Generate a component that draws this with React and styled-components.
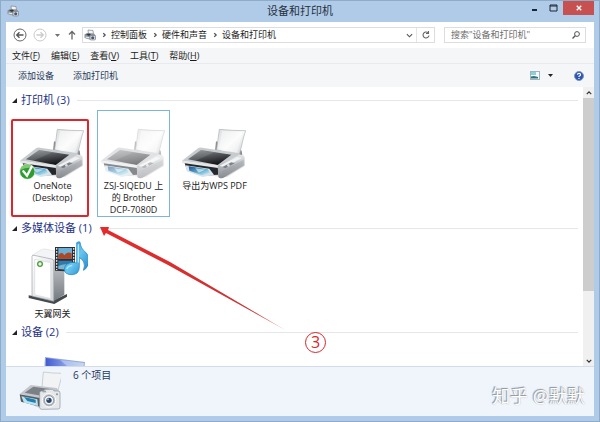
import React, { useState } from "react"
import styled, { createGlobalStyle } from "styled-components"

const GlobalStyle = createGlobalStyle`
  * {
    box-sizing: border-box;
  }

  body {
    margin: 0;
    font-family: "Open Sans", "Noto Sans CJK SC", sans-serif;
    font-size: 9px;
    line-height: 12px;
    color: #1b1b1b;
  }

  button,
  input {
    margin: 0;
    padding: 0;
    border: 0;
    background: none;
    font: inherit;
    color: inherit;
  }

  svg {
    display: block;
    flex: none;
  }
`

const Window = styled.div`
  display: flex;
  flex-direction: column;
  height: 100vh;
  padding: 0 5px 5px;
  background: #b0cbe8;
  border: 1px solid #8eabc9;
  overflow: hidden;
`

const TitleBar = styled.header`
  display: grid;
  grid-template-columns: 1fr auto 1fr;
  flex: none;
  height: 21px;
`

const TitleIcon = styled.div`
  padding: 4px 1px;
`

const Title = styled.h1`
  margin: 0;
  font-size: 11px;
  font-weight: 400;
  line-height: 20px;
  color: #26323f;
`

const WindowButtons = styled.div`
  display: flex;
  justify-content: flex-end;
  height: 14px;
`

const WindowButton = styled.button`
  display: flex;
  align-items: center;
  justify-content: center;
  width: ${(props) => (props.$close ? 31 : 19)}px;
  background: ${(props) => (props.$close ? "#c75050" : "transparent")};
`

const Client = styled.main`
  display: flex;
  flex-direction: column;
  flex: 1;
  min-height: 0;
  background: #fff;
`

const NavBar = styled.nav`
  display: flex;
  align-items: center;
  flex: none;
  height: 26px;
  padding: 0 8px 0 7px;
`

const NavButton = styled.button`
  display: flex;
  align-items: center;
  justify-content: center;
  width: ${(props) => props.$width}px;
  height: 16px;
`

const AddressBar = styled.div`
  display: flex;
  align-items: center;
  flex: 1;
  height: 16px;
  margin-right: 9px;
  padding-left: 1px;
  border: 1px solid #dcdddf;
`

const Crumbs = styled.div`
  display: flex;
  align-items: center;
  flex: 1;
`

const Crumb = styled.button`
  color: #1b1b1b;
`

const CrumbArrow = styled.span`
  display: flex;
  justify-content: center;
  width: 15px;
`

const RefreshButton = styled(NavButton)`
  height: 14px;
  border-left: 1px solid #e3e4e6;
`

const Search = styled.label`
  display: flex;
  align-items: center;
  justify-content: space-between;
  width: 142px;
  height: 16px;
  padding: 0 5px 0 6px;
  border: 1px solid #dcdddf;
`

const SearchInput = styled.input`
  flex: 1;
  min-width: 0;
  outline: none;

  &::placeholder {
    color: #6d6d6d;
    opacity: 1;
  }
`

const MenuBar = styled.div`
  display: flex;
  gap: 11px;
  flex: none;
  height: 16px;
  padding: 2px 6px;
  background: #f5f6f7;
  border-bottom: 1px solid #e8ebee;
`

const Toolbar = styled.div`
  display: flex;
  align-items: center;
  gap: 19px;
  flex: none;
  height: 23px;
  padding: 0 10px 0 12px;
  background: #f5f6f7;
  color: #1e395b;
`

const ToolbarRight = styled.div`
  display: flex;
  align-items: center;
  gap: 21px;
  margin-left: auto;
`

const ViewButton = styled.button`
  display: flex;
  align-items: center;
  gap: 8px;
`

const Body = styled.div`
  position: relative;
  display: flex;
  flex: 1;
  min-height: 0;
`

const Groups = styled.div`
  flex: 1;
  min-width: 0;
  padding: 4px 5px 0 6px;
  overflow: hidden;
`

const Group = styled.section`
  padding-bottom: 2px;
`

const GroupHeader = styled.button`
  display: flex;
  align-items: center;
  gap: 4px;
  width: 100%;
  height: 18px;
  margin-bottom: 1px;
  font-size: 11px;
  line-height: 18px;
  color: #1e3287;

  &::after {
    content: "";
    flex: 1;
    height: 1px;
    margin-left: 3px;
    background: #e4e7ea;
  }
`

const Tiles = styled.div`
  display: flex;
  gap: 8px;
  padding-left: 4px;
`

const TileBox = styled.button`
  position: relative;
  display: flex;
  flex-direction: column;
  align-items: center;
  width: 73px;
  border: 1px solid ${(props) => (props.$selected ? "#7fb4dc" : "transparent")};
`

const TileIcon = styled.span`
  display: flex;
  align-items: flex-end;
  height: 69px;
  opacity: ${(props) => (props.$faded ? 0.55 : 1)};
`

const TileLabel = styled.span`
  white-space: pre-line;
`

const Highlight = styled.span`
  position: absolute;
  inset: 8px -1px -1px -6px;
  border: 2px solid #e0242b;
  border-radius: 2px;
`

const Pointer = styled.svg`
  position: absolute;
  left: 92px;
  top: 138px;
  pointer-events: none;
`

const Step = styled.span`
  position: absolute;
  left: 299px;
  top: 245px;
  width: 21px;
  height: 21px;
  border: 1px solid #d9252b;
  border-radius: 50%;
  font-size: 16px;
  line-height: 19px;
  text-align: center;
  color: #d9252b;
`

const Scrollbar = styled.div`
  display: flex;
  flex-direction: column;
  width: 11px;
  background: #f0f0f0;
`

const ScrollButton = styled.button`
  display: flex;
  align-items: center;
  justify-content: center;
  height: 11px;
`

const Track = styled.div`
  flex: 1;
`

const Thumb = styled.div`
  height: 75%;
  background: #cdcdcd;
`

const StatusBar = styled.footer`
  display: flex;
  flex: none;
  gap: 12px;
  height: 50px;
  padding: 2px 9px 2px 12px;
  background: #f0f4fb;
  border-top: 1px solid #d3dce8;
  color: #1e395b;
`

const ItemCount = styled.span`
  font-size: 10px;
`

const Watermark = styled.span`
  margin: 15px 0 0 auto;
  font-size: 18px;
  line-height: 24px;
  color: #fff;
  text-shadow: -1px -1px 1px #8b8f96, 0 0 1px #a2a6ad;
`

const SmallPrinter = () => (
  <svg width="12" height="12" viewBox="0 0 12 12">
    <path d="M4 1l5 .5.5 4-5 .5z" fill="#f4f4f4" stroke="#7d858e" strokeWidth=".7" />
    <path d="M.5 5.5L3 4l7 .6 1.5 2V10l-5 .8L.5 9z" fill="#8a9199" />
    <path d="M2 5.5l3-.9 2 1-2 1.4z" fill="#343b44" />
    <path d="M1.5 8l4 .8" stroke="#e7edf3" strokeWidth="1.2" />
    <rect x="6" y="6.5" width="5.5" height="4.5" rx="1" fill="#d7dade" stroke="#707881" strokeWidth=".6" />
    <circle cx="8.7" cy="8.8" r="1.5" fill="#43586f" />
  </svg>
)

const PrinterIcon = ({ checked }) => (
  <svg width="70" height="54" viewBox="0 0 210 162">
    <defs>
      <linearGradient id="paper" x1="0" y1="0" x2="1" y2="1">
        <stop offset="0" stopColor="#d9dbdd" />
        <stop offset=".5" stopColor="#fafafa" />
        <stop offset="1" stopColor="#c9cccf" />
      </linearGradient>
      <linearGradient id="glass" x1="0" y1="0" x2=".4" y2="1">
        <stop offset="0" stopColor="#8d9195" />
        <stop offset="1" stopColor="#17191c" />
      </linearGradient>
      <linearGradient id="side" x1="0" y1="0" x2="0" y2="1">
        <stop offset="0" stopColor="#e4e6e8" />
        <stop offset="1" stopColor="#85898f" />
      </linearGradient>
      <linearGradient id="photo" x1="0" y1="0" x2="1" y2="1">
        <stop offset="0" stopColor="#1c4f8f" />
        <stop offset=".6" stopColor="#69b7d6" />
        <stop offset="1" stopColor="#e8f5fa" />
      </linearGradient>
    </defs>
    <path d="M14 118l60 30 66 6 54-34-10-14z" fill="#000" opacity=".13" />
    <path d="M108 46l-3 28 8 8 74 6-2-14-8-4z" fill="#888d92" />
    <path d="M118 10q38 4 79 4-3 8-6 19l-14 58-67-20z" fill="url(#paper)" stroke="#adb1b5" strokeWidth="2" />
    <path d="M126 14l62 4-17 64-53-16z" fill="#fff" opacity=".45" />
    <path d="M6 104l48-37q4-3 12-2l108 16 15 10-52 32z" fill="#c8cbce" />
    <path d="M24 100l39-28 91 14-41 31z" fill="url(#glass)" />
    <path d="M24 100l38-27 42 6-58 25z" fill="#fff" opacity=".12" />
    <path d="M6 104l110 14 2 13-32-2-80-18z" fill="#e4e6e8" />
    <path d="M14 112l100 14v20l-28 2-66-18z" fill="#24282d" />
    <path d="M16 118l72 10 14 18-34 7-48-17z" fill="#d7e3eb" />
    <path d="M26 121l58 9 6 11-24 7-38-14z" fill="url(#photo)" />
    <path d="M46 127l30 4-20 9z" fill="#dff4f6" opacity=".65" />
    <path d="M113 120q4-5 14-9l50-24q15-3 17 8v23l-63 37q-12 5-16-2z" fill="url(#side)" />
    <path d="M119 119l52-26 15 3-53 28z" fill="#f1f2f3" />
    <path d="M127 123l27-14 10 3-28 15z" fill="#7c8187" />
    <circle cx="145" cy="118" r="4" fill="#d9dcdf" />
    <path d="M126 135l65-34v17l-62 35z" fill="#8d9298" opacity=".35" />
    {checked && (
      <g>
        <circle cx="28" cy="137" r="23" fill="#2e9d31" stroke="#fff" strokeWidth="2" />
        <path d="M8 132q3-18 22-17 15 1 19 13-20-7-41 4z" fill="#a5dc8f" opacity=".7" />
        <path d="M16 136l11 13 14-27" fill="none" stroke="#fff" strokeWidth="7" strokeLinecap="round" />
      </g>
    )}
  </svg>
)

const MediaServerIcon = () => (
  <svg width="70" height="68" viewBox="0 0 210 204">
    <defs>
      <linearGradient id="tower" x1="0" y1="0" x2="1" y2="1">
        <stop offset="0" stopColor="#ffffff" />
        <stop offset="1" stopColor="#d0d2d5" />
      </linearGradient>
      <linearGradient id="towerSide" x1="0" y1="0" x2="0" y2="1">
        <stop offset="0" stopColor="#d5d8dc" />
        <stop offset="1" stopColor="#74797f" />
      </linearGradient>
      <linearGradient id="note" x1="0" y1="0" x2="1" y2="1">
        <stop offset="0" stopColor="#1786cb" />
        <stop offset=".5" stopColor="#69c6ef" />
        <stop offset="1" stopColor="#1379bf" />
      </linearGradient>
    </defs>
    <path d="M32 166l76 14 39-18v8l-38 22-77-18z" fill="#44494e" />
    <path d="M42 46l26-16q6-4 14-3l57 12-32 22z" fill="#f3f4f5" stroke="#c4c7ca" strokeWidth="1" />
    <path d="M106 60l33-21v125l-33 20z" fill="url(#towerSide)" />
    <path d="M42 50q0-5 6-4l53 11q6 1 6 6v121l-65-16z" fill="url(#tower)" stroke="#9da2a7" strokeWidth="2" />
    <path d="M50 58l48 10v108l-48-12z" fill="#fff" stroke="#d6d8da" strokeWidth="2" />
    <circle cx="66" cy="72" r="7" fill="#f3f8f0" stroke="#479d36" strokeWidth="4" />
    <path d="M111 21h60v74l-60-3z" fill="#2d3137" />
    <path d="M121 24h41v32h-41z" fill="#6eafd5" />
    <path d="M121 46q10-16 18 0 8-13 22-6v16h-40z" fill="#ad4726" />
    <path d="M121 62h41v28l-41-3z" fill="#3178ad" />
    <path d="M121 78q20-10 41-2v14l-41-3z" fill="#79b5cf" />
    <path d="M116 24v66M167 24v68" fill="none" stroke="#d7dde1" strokeWidth="4" strokeDasharray="5 4" />
    <path
      d="M176 8q5-4 10-2 2 20 17 31 18 18 5 42-5 10-12 12 6-14 1-25-5-10-13-13v28q0 22-22 23-22 0-23-15 0-17 18-21 11-2 19 1z"
      fill="url(#note)"
      stroke="#1b82bd"
      strokeWidth="2"
    />
    <path d="M181 14v52M147 85q4-8 14-8" fill="none" stroke="#b3e7fa" strokeWidth="4" strokeLinecap="round" />
  </svg>
)

const MonitorIcon = () => (
  <svg width="70" height="56" viewBox="0 0 70 56">
    <defs>
      <linearGradient id="screen">
        <stop offset="0" stopColor="#4058d0" />
        <stop offset=".5" stopColor="#839be6" />
        <stop offset="1" stopColor="#a3c2ed" />
      </linearGradient>
    </defs>
    <path d="M27 1l40 5-4 36-38-6z" fill="#98acd0" />
    <path d="M28 2l38 5-4 33-35-5z" fill="url(#screen)" />
    <path d="M42 4l24 3-3 15z" fill="#fff" opacity=".35" />
    <path d="M41 41l9 2v7l8 4H35l6-4z" fill="#a5abb3" />
  </svg>
)

const DevicesIcon = () => (
  <svg width="43" height="42" viewBox="0 0 129 126">
    <path d="M4 92l60 25 62-4-2-24z" fill="#000" opacity=".13" />
    <path d="M76 9q28 4 58 4l-14 50-48-8z" fill="#f2f3f4" stroke="#b8bec4" strokeWidth="2" />
    <path d="M6 74l32-26 78 9 10 12-50 23z" fill="#c3c7cb" />
    <path d="M20 71l26-18 50 7-26 20z" fill="#7a8086" />
    <path d="M5 76l64 12v26L9 98z" fill="#565d64" />
    <path d="M10 82l48 9 2 20-42-10z" fill="#b8e4ef" />
    <path d="M18 84l35 8v10l-25-6z" fill="#247bae" />
    <path d="M65 71q0-5 6-5h6l4-5h23l4 5h12q6 0 6 6v42q0 6-6 6l-49 1q-6 0-6-6z" fill="#e5e8eb" stroke="#8c949c" strokeWidth="2" />
    <rect x="73" y="65" width="11" height="5" fill="#9ba5b0" />
    <circle cx="93" cy="94" r="20" fill="#bcc2c9" stroke="#fff" strokeWidth="3" />
    <circle cx="93" cy="94" r="14" fill="#f4f6f8" stroke="#737c86" strokeWidth="2" />
    <circle cx="93" cy="94" r="8" fill="#2d4664" />
    <circle cx="90" cy="91" r="3" fill="#8fb8dc" />
    <circle cx="117" cy="76" r="3" fill="#87919b" />
  </svg>
)

const Chevron = ({ d, size = 7, color = "#555", width = 1.3 }) => (
  <svg width={size} height={size} viewBox="0 0 8 8">
    <path d={d} fill="none" stroke={color} strokeWidth={width} />
  </svg>
)

const menus = [
  ["文件", "F"],
  ["编辑", "E"],
  ["查看", "V"],
  ["工具", "T"],
  ["帮助", "H"],
]

const crumbs = ["控制面板", "硬件和声音", "设备和打印机"]

const groups = [
  {
    name: "打印机",
    count: 3,
    items: [
      { label: "OneNote\n(Desktop)", icon: <PrinterIcon checked />, marked: true },
      { label: "ZSJ-SIQEDU 上\n的 Brother\nDCP-7080D", icon: <PrinterIcon />, faded: true },
      { label: "导出为WPS PDF", icon: <PrinterIcon /> },
    ],
  },
  {
    name: "多媒体设备",
    count: 1,
    items: [{ label: "天翼网关", icon: <MediaServerIcon /> }],
  },
  {
    name: "设备",
    count: 2,
    items: [{ label: "", icon: <MonitorIcon /> }],
  },
]

const Tile = ({ item, selected, onSelect }) => (
  <TileBox $selected={selected} onClick={onSelect}>
    <TileIcon $faded={item.faded}>{item.icon}</TileIcon>
    <TileLabel>{item.label}</TileLabel>
    {item.marked && <Highlight />}
  </TileBox>
)

const App = () => {
  const [selected, setSelected] = useState(groups[0].items[1].label)
  const [query, setQuery] = useState("")

  return (
    <>
      <GlobalStyle />
      <Window>
        <TitleBar>
          <TitleIcon>
            <SmallPrinter />
          </TitleIcon>
          <Title>设备和打印机</Title>
          <WindowButtons>
            <WindowButton aria-label="最小化">
              <svg width="7" height="8">
                <path d="M1 6h5" stroke="#1d2733" strokeWidth="2" />
              </svg>
            </WindowButton>
            <WindowButton aria-label="最大化">
              <svg width="9" height="8">
                <path d="M1 1h7v6H1zM1 2h7" fill="none" stroke="#1d2733" />
              </svg>
            </WindowButton>
            <WindowButton $close aria-label="关闭">
              <Chevron d="M1 1l6 6M7 1L1 7" color="#fff" width={1.8} size={6} />
            </WindowButton>
          </WindowButtons>
        </TitleBar>

        <Client>
          <NavBar>
            <NavButton $width={14} aria-label="后退">
              <svg width="14" height="14" viewBox="0 0 14 14">
                <circle cx="7" cy="7" r="6" fill="none" stroke="#686868" />
                <path d="M10.500 7H4M6.500 4.200L3.700 7l2.800 2.800" fill="none" stroke="#555" strokeWidth="1.300" />
              </svg>
            </NavButton>
            <NavButton $width={26} aria-label="前进">
              <svg width="14" height="14" viewBox="0 0 14 14">
                <circle cx="7" cy="7" r="6" fill="none" stroke="#cbcbcb" />
                <path d="M3.500 7H10M7.500 4.200L10.300 7 7.500 9.800" fill="none" stroke="#cbcbcb" strokeWidth="1.300" />
              </svg>
            </NavButton>
            <NavButton $width={8} aria-label="最近的位置">
              <svg width="5" height="3">
                <path d="M0 0h5L2.500 3z" fill="#707070" />
              </svg>
            </NavButton>
            <NavButton $width={21} aria-label="上移">
              <svg width="8" height="10" viewBox="0 0 8 10">
                <path d="M4 9.500V1.500M1 4.500l3-3 3 3" fill="none" stroke="#666" strokeWidth="1.300" />
              </svg>
            </NavButton>
            <AddressBar>
              <SmallPrinter />
              <Crumbs>
                {crumbs.map((crumb) => (
                  <React.Fragment key={crumb}>
                    <CrumbArrow>
                      <Chevron d="M3 1.500L5.500 4 3 6.500" size={6} width={1.8} />
                    </CrumbArrow>
                    <Crumb>{crumb}</Crumb>
                  </React.Fragment>
                ))}
              </Crumbs>
              <NavButton $width={13} aria-label="历史记录">
                <Chevron d="M1 2.500l3 3 3-3" />
              </NavButton>
              <RefreshButton $width={18} aria-label="刷新">
                <svg width="8" height="8" viewBox="0 0 8 8">
                  <path d="M6 1.700A3 3 0 1 0 7 4.500M6.500 0v2.500H4" fill="none" stroke="#666" strokeWidth="1.100" />
                </svg>
              </RefreshButton>
            </AddressBar>
            <Search>
              <SearchInput
                placeholder={'搜索"设备和打印机"'}
                aria-label="搜索"
                value={query}
                onChange={(e) => setQuery(e.target.value)}
              />
              <svg width="8" height="8" viewBox="0 0 8 8">
                <circle cx="5" cy="3" r="2.400" fill="none" stroke="#555" />
                <path d="M3.200 4.800L.5 7.500" stroke="#555" strokeWidth="1.300" />
              </svg>
            </Search>
          </NavBar>

          <MenuBar>
            {menus.map(([name, key]) => (
              <button key={key}>
                {name}(<u>{key}</u>)
              </button>
            ))}
          </MenuBar>

          <Toolbar>
            <button>添加设备</button>
            <button>添加打印机</button>
            <ToolbarRight>
              <ViewButton aria-label="更改视图">
                <svg width="10" height="9" viewBox="0 0 10 9">
                  <rect x=".5" y=".5" width="9" height="8" fill="#f4fafc" stroke="#9db3c1" />
                  <path d="M1 1h5v3H1z" fill="#8ccfda" />
                  <path d="M1 5.500l3-.5 4 1v1.500H1z" fill="#356f78" />
                </svg>
                <svg width="5" height="3">
                  <path d="M0 0h5L2.500 3z" fill="#222" />
                </svg>
              </ViewButton>
              <button aria-label="帮助">
                <svg width="10" height="10" viewBox="0 0 10 10">
                  <circle cx="5" cy="5" r="4.500" fill="#2d56b0" stroke="#8095bd" />
                  <path d="M3.400 3.800Q3.500 2.300 5 2.300T6.600 3.700Q6.600 4.700 5 5.300v.8M5 7v1" fill="none" stroke="#fff" strokeWidth="1.200" />
                </svg>
              </button>
            </ToolbarRight>
          </Toolbar>

          <Body>
            <Groups>
              {groups.map((group) => (
                <Group key={group.name}>
                  <GroupHeader>
                    <svg width="5" height="5">
                      <path d="M5 0v5H0z" fill="#222" />
                    </svg>
                    {group.name} ({group.count})
                  </GroupHeader>
                  <Tiles>
                    {group.items.map((item) => (
                      <Tile
                        key={item.label}
                        item={item}
                        selected={item.label === selected}
                        onSelect={() => setSelected(item.label)}
                      />
                    ))}
                  </Tiles>
                </Group>
              ))}
            </Groups>
            <Scrollbar>
              <ScrollButton aria-label="向上滚动">
                <Chevron d="M1 5.500l3-3 3 3" color="#333" width={1.6} size={6} />
              </ScrollButton>
              <Track>
                <Thumb />
              </Track>
              <ScrollButton aria-label="向下滚动">
                <Chevron d="M1 2.500l3 3 3-3" color="#333" width={1.6} size={6} />
              </ScrollButton>
            </Scrollbar>
            <Pointer width="192" height="110" viewBox="0 0 192 110">
              <defs>
                <linearGradient id="tail">
                  <stop offset="0" stopColor="#e52a2a" />
                  <stop offset=".8" stopColor="#c93434" />
                  <stop offset="1" stopColor="#c93434" stopOpacity=".4" />
                </linearGradient>
              </defs>
              <path d="M2 2l9 0-1 3 62 32 117 69L70 40 8 8l-2 3z" fill="url(#tail)" />
            </Pointer>
            <Step>3</Step>
          </Body>

          <StatusBar>
            <DevicesIcon />
            <ItemCount>6 个项目</ItemCount>
            <Watermark>知乎 @默默</Watermark>
          </StatusBar>
        </Client>
      </Window>
    </>
  )
}

export default App
